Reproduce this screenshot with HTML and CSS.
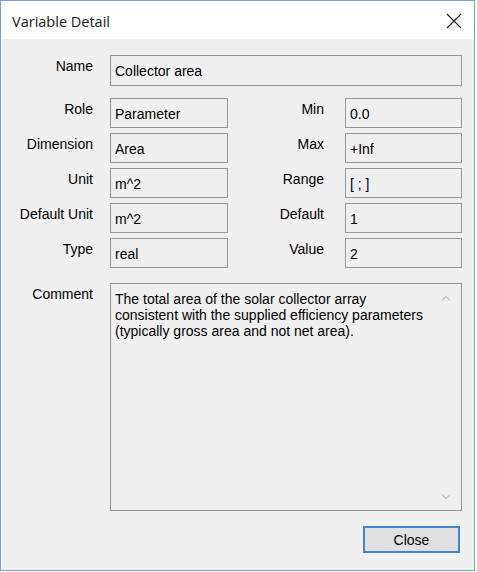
FILE: index.html
```html
<!DOCTYPE html>
<html>
<head>
<meta charset="utf-8">
<title>Variable Detail</title>
<link rel="stylesheet" href="styles.css">
</head>
<body>
<div class="window">
  <div class="titlebar">
    <span class="title">Variable Detail</span>
    <svg class="close-x" width="16" height="16" viewBox="0 0 16 16"><path d="M1 1 L15 15 M15 1 L1 15" stroke="#1e1e1e" stroke-width="1.1" fill="none"/></svg>
  </div>
  <div class="content">
    <div class="grid">
      <div class="label">Name</div>
      <div class="field wide name">Collector area</div>

      <div class="label">Role</div>
      <div class="field">Parameter</div>
      <div class="label right">Min</div>
      <div class="field">0.0</div>

      <div class="label">Dimension</div>
      <div class="field">Area</div>
      <div class="label right">Max</div>
      <div class="field">+Inf</div>

      <div class="label">Unit</div>
      <div class="field">m^2</div>
      <div class="label right">Range</div>
      <div class="field">[ ; ]</div>

      <div class="label">Default Unit</div>
      <div class="field">m^2</div>
      <div class="label right">Default</div>
      <div class="field">1</div>

      <div class="label">Type</div>
      <div class="field">real</div>
      <div class="label right">Value</div>
      <div class="field">2</div>

      <div class="label comment-label">Comment</div>
      <div class="field wide comment">
        <div class="comment-text">The total area of the solar collector array consistent with the supplied efficiency parameters (typically gross area and not net area).</div>
        <div class="scrollbar">
          <svg width="10" height="6" viewBox="0 0 10 6"><path d="M1 5.5 L5 1.5 L9 5.5" stroke="#c2c2c2" stroke-width="1.2" fill="none"/></svg>
          <svg width="10" height="6" viewBox="0 0 10 6"><path d="M1 0.5 L5 4.5 L9 0.5" stroke="#c2c2c2" stroke-width="1.2" fill="none"/></svg>
        </div>
      </div>
    </div>
    <div class="buttons">
      <button class="btn">Close</button>
    </div>
  </div>
</div>
</body>
</html>
```
FILE: styles.css
```css
html, body {
  margin: 0;
  padding: 0;
  background: #ffffff;
}

.window {
  width: 475px;
  height: 571px;
  box-sizing: border-box;
  border: 1px solid #7b9fd6;
  background: #f0f0f0;
  font-family: "Liberation Sans", Arial, sans-serif;
  font-size: 14px;
  color: #000;
  display: flex;
  flex-direction: column;
}

.titlebar {
  height: 38px;
  background: #ffffff;
  display: flex;
  align-items: center;
  justify-content: space-between;
  padding: 2px 10px 0 11px;
  box-sizing: border-box;
  flex-shrink: 0;
}

.title {
  font-family: "Open Sans", "Noto Sans", sans-serif;
  font-size: 14.5px;
  color: #1a1a1a;
}

.close-x {
  margin-right: 2px;
}

.content {
  flex: 1;
  display: flex;
  flex-direction: column;
  padding: 16px 12px 16px 0;
  box-shadow: inset 2px 0 2px -1px #ffffff;
}

.grid {
  display: grid;
  grid-template-columns: 109px 118px 117px 117px;
  grid-template-rows: 38px repeat(5, 30px) 238px;
  row-gap: 5px;
}

.label {
  text-align: right;
  padding-right: 17px;
  padding-top: 3px;
  line-height: 16px;
  white-space: nowrap;
}

.label.right {
  padding-right: 21px;
}

.field {
  border: 1px solid #989898;
  background: #f0f0f0;
  padding: 7px 4px 0 4px;
  line-height: 16px;
  white-space: nowrap;
  overflow: hidden;
}

.field.wide {
  grid-column: 2 / 5;
}

.name {
  height: 31px;
  box-sizing: border-box;
}

.comment-label {
  padding-top: 13px;
}

.comment {
  align-self: end;
  height: 228px;
  box-sizing: border-box;
  padding: 0;
  display: flex;
  white-space: normal;
}

.comment-text {
  flex: 1;
  padding: 7px 4px 0 4px;
  line-height: 16px;
}

.scrollbar {
  width: 28px;
  display: flex;
  flex-direction: column;
  justify-content: space-between;
  align-items: center;
  padding: 11px 2px 10px 0;
  box-sizing: border-box;
  flex-shrink: 0;
}

.buttons {
  display: flex;
  justify-content: flex-end;
  margin-top: 15px;
  padding-right: 2px;
}

.btn {
  width: 97px;
  height: 27px;
  box-sizing: border-box;
  border: 2px solid #3f86c9;
  background: #e1e1e1;
  font-family: "Liberation Sans", Arial, sans-serif;
  font-size: 14px;
  color: #000;
  padding: 0;
}
```
